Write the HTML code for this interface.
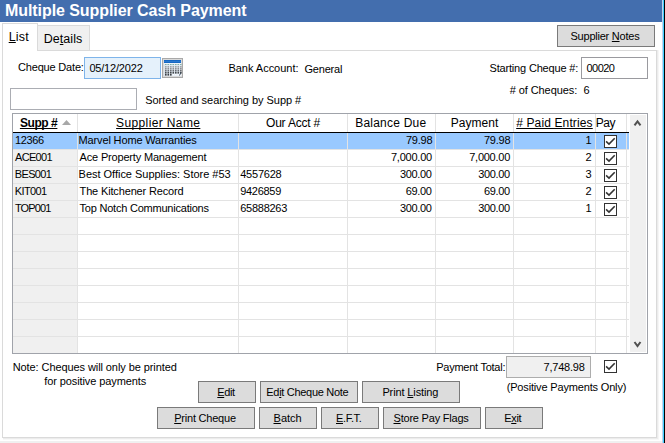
<!DOCTYPE html>
<html><head><meta charset="utf-8"><style>
html,body{margin:0;padding:0;}
body{width:665px;height:443px;position:relative;overflow:hidden;background:#fff;font-family:"Liberation Sans", sans-serif;}
.a{position:absolute;box-sizing:border-box;}
.t{position:absolute;white-space:pre;font-family:"Liberation Sans", sans-serif;}
u{text-decoration:underline;text-decoration-skip-ink:none;text-underline-offset:1px;text-decoration-thickness:1px;}
svg{position:absolute;}
</style></head><body>
<div class=a style='left:0px;top:0px;width:662px;height:22px;background:#436EAE;'></div>
<div class=a style='left:662px;top:0px;width:1px;height:443px;background:#BFD3EE;'></div>
<div class=a style='left:663px;top:0px;width:1px;height:443px;background:#3FCFFF;'></div>
<div class=a style='left:664px;top:0px;width:1px;height:443px;background:#000;'></div>
<div class=a style='left:0px;top:441px;width:662px;height:2px;background:#F0F0F0;'></div>
<div class=a style='left:2px;top:50px;width:655px;height:388px;box-shadow:inset 0 0 0 1px #DADADA;'></div>
<div class=a style='left:657px;top:50px;width:1px;height:389px;background:#ECECEC;'></div>
<div class=a style='left:658px;top:50px;width:1px;height:389px;background:#F6F6F6;'></div>
<div class=a style='left:3px;top:438px;width:655px;height:1px;background:#ECECEC;'></div>
<div class=a style='left:3px;top:439px;width:656px;height:1px;background:#F8F8F8;'></div>
<div class=a style='left:2px;top:23px;width:36px;height:28px;background:#fff;box-shadow:inset 0 0 0 1px #DADADA;'></div>
<div class=a style='left:3px;top:49px;width:34px;height:2px;background:#fff;'></div>
<div class=a style='left:37px;top:25px;width:53px;height:26px;background:#F0F0F0;box-shadow:inset 0 0 0 1px #DADADA;'></div>
<div class=a style='left:557px;top:25px;width:98px;height:22px;background:#DCDCDC;box-shadow:inset 0 0 0 1px #7A7A7A;'></div>
<div class=a style='left:84px;top:57px;width:77px;height:22px;background:#E5F1FB;box-shadow:inset 0 0 0 1px #7EB4EA;'></div>
<svg style='left:162px;top:58px' width='21' height='20' viewBox='0 0 21 20'>
<rect x='0.5' y='0.5' width='20' height='19' fill='#DCE6F0' stroke='#A9A9A9'/>
<rect x='1.5' y='1.5' width='18' height='17' fill='none' stroke='#DADADA'/>
<rect x='2' y='2' width='17' height='3' fill='#1668C4'/>
<rect x='2' y='3' width='17' height='1' fill='#2A78CE'/>
<rect x='2' y='5' width='17' height='1' fill='#F0F4F8'/>
<rect x='4.6' y='7' width='0.9' height='11' fill='#E6EEF6'/><rect x='7.1' y='7' width='0.9' height='11' fill='#E6EEF6'/><rect x='9.6' y='7' width='0.9' height='11' fill='#E6EEF6'/><rect x='12.1' y='7' width='0.9' height='11' fill='#E6EEF6'/><rect x='14.6' y='7' width='0.9' height='11' fill='#E6EEF6'/><rect x='17.1' y='7' width='0.9' height='11' fill='#E6EEF6'/><rect x='3.0' y='6' width='1.5' height='1' fill='#7FAFA8'/><rect x='5.5' y='6' width='1.5' height='1' fill='#7FAFA8'/><rect x='8.0' y='6' width='1.5' height='1' fill='#7FAFA8'/><rect x='10.5' y='6' width='1.5' height='1' fill='#7FAFA8'/><rect x='13.0' y='6' width='1.5' height='1' fill='#7FAFA8'/><rect x='15.5' y='6' width='1.5' height='1' fill='#7FAFA8'/><rect x='18.0' y='6' width='1.5' height='1' fill='#7FAFA8'/><rect x='3.0' y='8' width='1.6' height='1.6' fill='#A0A4A8'/><rect x='5.5' y='8' width='1.6' height='1.6' fill='#A0A4A8'/><rect x='8.0' y='8' width='1.6' height='1.6' fill='#A0A4A8'/><rect x='10.5' y='8' width='1.6' height='1.6' fill='#A0A4A8'/><rect x='13.0' y='8' width='1.6' height='1.6' fill='#A0A4A8'/><rect x='15.5' y='8' width='1.6' height='1.6' fill='#A0A4A8'/><rect x='18.0' y='8' width='1.6' height='1.6' fill='#A0A4A8'/><rect x='3.0' y='10' width='1.6' height='1.6' fill='#8A8E92'/><rect x='5.5' y='10' width='1.6' height='1.6' fill='#8A8E92'/><rect x='8.0' y='10' width='1.6' height='1.6' fill='#8A8E92'/><rect x='10.5' y='10' width='1.6' height='1.6' fill='#8A8E92'/><rect x='13.0' y='10' width='1.6' height='1.6' fill='#8A8E92'/><rect x='15.5' y='10' width='1.6' height='1.6' fill='#8A8E92'/><rect x='18.0' y='10' width='1.6' height='1.6' fill='#8A8E92'/><rect x='3.0' y='12' width='1.6' height='1.6' fill='#6A6E72'/><rect x='5.5' y='12' width='1.6' height='1.6' fill='#6A6E72'/><rect x='8.0' y='12' width='1.6' height='1.6' fill='#6A6E72'/><rect x='10.5' y='12' width='1.6' height='1.6' fill='#6A6E72'/><rect x='13.0' y='12' width='1.6' height='1.6' fill='#6A6E72'/><rect x='15.5' y='12' width='1.6' height='1.6' fill='#6A6E72'/><rect x='18.0' y='12' width='1.6' height='1.6' fill='#6A6E72'/><rect x='3.0' y='14' width='1.6' height='1.6' fill='#45494D'/><rect x='5.5' y='14' width='1.6' height='1.6' fill='#45494D'/><rect x='8.0' y='14' width='1.6' height='1.6' fill='#45494D'/><rect x='10.5' y='14' width='1.6' height='1.6' fill='#45494D'/><rect x='13.0' y='14' width='1.6' height='1.6' fill='#45494D'/><rect x='15.5' y='14' width='1.6' height='1.6' fill='#45494D'/><rect x='18.0' y='14' width='1.6' height='1.6' fill='#45494D'/><rect x='3.0' y='16' width='1.6' height='1.6' fill='#3A3E42'/><rect x='5.5' y='16' width='1.6' height='1.6' fill='#3A3E42'/><rect x='8.0' y='16' width='1.6' height='1.6' fill='#3A3E42'/><rect x='10.5' y='16' width='1.6' height='1.6' fill='#F8FBFE'/><rect x='13.0' y='16' width='1.6' height='1.6' fill='#F8FBFE'/><rect x='15.5' y='16' width='1.6' height='1.6' fill='#F8FBFE'/><rect x='18.0' y='16' width='1.6' height='1.6' fill='#F8FBFE'/>
<path d='M17.5 17.5 L19 14.5' stroke='#405060' stroke-width='1'/>
</svg>
<div class=a style='left:581px;top:57px;width:67px;height:22px;background:#fff;box-shadow:inset 0 0 0 1px #9A9A9F;'></div>
<div class=a style='left:10px;top:88px;width:127px;height:22px;background:#fff;box-shadow:inset 0 0 0 1px #ABADB3;'></div>
<div class=a style='left:12px;top:113px;width:636px;height:241px;background:#fff;box-shadow:inset 0 0 0 1px #A0A3AA;'></div>
<div class=a style='left:13px;top:133px;width:64px;height:220px;background:#F0F0F0;'></div>
<div class=a style='left:13px;top:133px;width:616px;height:16px;background:#99C9FF;'></div>
<div class=a style='left:13px;top:132px;width:616px;height:1px;background:#000;'></div>
<div class=a style='left:13px;top:149px;width:616px;height:1px;background:#E3E3E3;'></div>
<div class=a style='left:13px;top:166px;width:616px;height:1px;background:#E3E3E3;'></div>
<div class=a style='left:13px;top:183px;width:616px;height:1px;background:#E3E3E3;'></div>
<div class=a style='left:13px;top:200px;width:616px;height:1px;background:#E3E3E3;'></div>
<div class=a style='left:13px;top:217px;width:616px;height:1px;background:#E3E3E3;'></div>
<div class=a style='left:13px;top:234px;width:616px;height:1px;background:#E3E3E3;'></div>
<div class=a style='left:13px;top:251px;width:616px;height:1px;background:#E3E3E3;'></div>
<div class=a style='left:13px;top:268px;width:616px;height:1px;background:#E3E3E3;'></div>
<div class=a style='left:13px;top:285px;width:616px;height:1px;background:#E3E3E3;'></div>
<div class=a style='left:13px;top:302px;width:616px;height:1px;background:#E3E3E3;'></div>
<div class=a style='left:13px;top:319px;width:616px;height:1px;background:#E3E3E3;'></div>
<div class=a style='left:13px;top:336px;width:616px;height:1px;background:#E3E3E3;'></div>
<div class=a style='left:77px;top:114px;width:1px;height:239px;background:#E3E3E3;'></div>
<div class=a style='left:238px;top:114px;width:1px;height:239px;background:#E3E3E3;'></div>
<div class=a style='left:347px;top:114px;width:1px;height:239px;background:#E3E3E3;'></div>
<div class=a style='left:435px;top:114px;width:1px;height:239px;background:#E3E3E3;'></div>
<div class=a style='left:513px;top:114px;width:1px;height:239px;background:#E3E3E3;'></div>
<div class=a style='left:595px;top:114px;width:1px;height:239px;background:#E3E3E3;'></div>
<div class=a style='left:626px;top:114px;width:1px;height:239px;background:#E3E3E3;'></div>
<div class=a style='left:13px;top:132px;width:616px;height:1px;background:#000;'></div>
<div class=a style='left:630px;top:115px;width:16px;height:237px;background:#F0F0F0;'></div>
<svg style='left:630px;top:115px' width='16' height='237' viewBox='0 0 16 237'>
<path d='M4.5 10.3 L7.5 6.3 L10.5 10.3' fill='none' stroke='#505050' stroke-width='2'/>
<path d='M4.5 227.0 L7.5 231.0 L10.5 227.0' fill='none' stroke='#505050' stroke-width='2'/>
</svg>
<svg style='left:62px;top:119px' width='10' height='7' viewBox='0 0 10 7'>
<path d='M0 6 L4.5 1 L9 6 Z' fill='#A8A8A8'/></svg>
<svg style='left:604px;top:135px' width='13' height='13' viewBox='0 0 13 13'>
<rect x='0.5' y='0.5' width='12' height='12' fill='#fff' stroke='#333'/>
<path d='M2.1 6.4 L5 9.1 L10.7 3.3' fill='none' stroke='#333' stroke-width='1.6'/></svg>
<svg style='left:604px;top:152px' width='13' height='13' viewBox='0 0 13 13'>
<rect x='0.5' y='0.5' width='12' height='12' fill='#fff' stroke='#333'/>
<path d='M2.1 6.4 L5 9.1 L10.7 3.3' fill='none' stroke='#333' stroke-width='1.6'/></svg>
<svg style='left:604px;top:169px' width='13' height='13' viewBox='0 0 13 13'>
<rect x='0.5' y='0.5' width='12' height='12' fill='#fff' stroke='#333'/>
<path d='M2.1 6.4 L5 9.1 L10.7 3.3' fill='none' stroke='#333' stroke-width='1.6'/></svg>
<svg style='left:604px;top:186px' width='13' height='13' viewBox='0 0 13 13'>
<rect x='0.5' y='0.5' width='12' height='12' fill='#fff' stroke='#333'/>
<path d='M2.1 6.4 L5 9.1 L10.7 3.3' fill='none' stroke='#333' stroke-width='1.6'/></svg>
<svg style='left:604px;top:203px' width='13' height='13' viewBox='0 0 13 13'>
<rect x='0.5' y='0.5' width='12' height='12' fill='#fff' stroke='#333'/>
<path d='M2.1 6.4 L5 9.1 L10.7 3.3' fill='none' stroke='#333' stroke-width='1.6'/></svg>
<div class=a style='left:506px;top:356px;width:85px;height:22px;background:#F0F0F0;box-shadow:inset 0 0 0 1px #ADADAD;'></div>
<svg style='left:604px;top:360px' width='13' height='13' viewBox='0 0 13 13'>
<rect x='0.5' y='0.5' width='12' height='12' fill='#fff' stroke='#333'/>
<path d='M2.1 6.4 L5 9.1 L10.7 3.3' fill='none' stroke='#333' stroke-width='1.6'/></svg>
<div class=a style='left:198px;top:381px;width:58px;height:22px;background:#DCDCDC;box-shadow:inset 0 0 0 1px #7A7A7A;'></div>
<div class=a style='left:260px;top:381px;width:98px;height:22px;background:#DCDCDC;box-shadow:inset 0 0 0 1px #7A7A7A;'></div>
<div class=a style='left:362px;top:381px;width:98px;height:22px;background:#DCDCDC;box-shadow:inset 0 0 0 1px #7A7A7A;'></div>
<div class=a style='left:157px;top:407px;width:98px;height:22px;background:#DCDCDC;box-shadow:inset 0 0 0 1px #7A7A7A;'></div>
<div class=a style='left:259px;top:407px;width:58px;height:22px;background:#DCDCDC;box-shadow:inset 0 0 0 1px #7A7A7A;'></div>
<div class=a style='left:321px;top:407px;width:58px;height:22px;background:#DCDCDC;box-shadow:inset 0 0 0 1px #7A7A7A;'></div>
<div class=a style='left:383px;top:407px;width:98px;height:22px;background:#DCDCDC;box-shadow:inset 0 0 0 1px #7A7A7A;'></div>
<div class=a style='left:485px;top:407px;width:58px;height:22px;background:#DCDCDC;box-shadow:inset 0 0 0 1px #7A7A7A;'></div>
<div class=t style='left:5.00px;top:-9.00px;font-size:16px;line-height:40px;height:40px;color:#fff;font-weight:bold;letter-spacing:-0.069px;'>Multiple Supplier Cash Payment</div>
<div class=t style='left:8.70px;top:17.00px;font-size:12.5px;line-height:40px;height:40px;color:#000;letter-spacing:0.167px;'><u>L</u>ist</div>
<div class=t style='left:43.80px;top:19.00px;font-size:12.5px;line-height:40px;height:40px;color:#000;letter-spacing:0.033px;'>De<u>t</u>ails</div>
<div class=t style='left:570.50px;top:16.00px;font-size:11px;line-height:40px;height:40px;color:#000;letter-spacing:-0.231px;'>Supplier <u>N</u>otes</div>
<div class=t style='left:18.00px;top:47.00px;font-size:11px;line-height:40px;height:40px;color:#000;letter-spacing:-0.182px;'>Cheque Date:</div>
<div class=t style='left:89.40px;top:48.00px;font-size:11px;line-height:40px;height:40px;color:#000;letter-spacing:-0.189px;'>05/12/2022</div>
<div class=t style='left:228.40px;top:48.00px;font-size:11px;line-height:40px;height:40px;color:#000;letter-spacing:-0.017px;'>Bank Account:</div>
<div class=t style='left:304.50px;top:49.00px;font-size:11px;line-height:40px;height:40px;color:#000;letter-spacing:-0.217px;'>General</div>
<div class=t style='left:489.50px;top:48.00px;font-size:11px;line-height:40px;height:40px;color:#000;letter-spacing:-0.176px;'>Starting Cheque #:</div>
<div class=t style='left:586.40px;top:48.00px;font-size:11px;line-height:40px;height:40px;color:#000;letter-spacing:-0.500px;'>00020</div>
<div class=t style='left:509.80px;top:70.00px;font-size:11px;line-height:40px;height:40px;color:#000;letter-spacing:-0.092px;'># of Cheques:</div>
<div class=t style='left:583.50px;top:70.00px;font-size:11px;line-height:40px;height:40px;color:#000;'>6</div>
<div class=t style='left:145.20px;top:80.00px;font-size:11px;line-height:40px;height:40px;color:#000;letter-spacing:-0.041px;'>Sorted and searching by Supp #</div>
<div class=t style='left:19.90px;top:103.00px;font-size:12px;line-height:40px;height:40px;color:#000;font-weight:bold;letter-spacing:-0.420px;'><u>Supp #</u></div>
<div class=t style='left:116.10px;top:103.00px;font-size:12px;line-height:40px;height:40px;color:#000;letter-spacing:0.375px;'><u>Supplier Name</u></div>
<div class=t style='left:266.00px;top:103.00px;font-size:12px;line-height:40px;height:40px;color:#000;letter-spacing:-0.200px;'>Our Acct #</div>
<div class=t style='left:355.20px;top:103.00px;font-size:12px;line-height:40px;height:40px;color:#000;letter-spacing:0.220px;'>Balance Due</div>
<div class=t style='left:450.70px;top:103.00px;font-size:12px;line-height:40px;height:40px;color:#000;letter-spacing:0.050px;'>Payment</div>
<div class=t style='left:516.20px;top:103.00px;font-size:12px;line-height:40px;height:40px;color:#000;letter-spacing:0.131px;'><u># Paid Entries</u></div>
<div class=t style='left:595.80px;top:103.00px;font-size:12px;line-height:40px;height:40px;color:#000;letter-spacing:-0.500px;'>Pay</div>
<div class=t style='left:14.90px;top:120.00px;font-size:11px;line-height:40px;height:40px;color:#000;letter-spacing:-0.325px;'>12366</div>
<div class=t style='left:78.60px;top:120.00px;font-size:11px;line-height:40px;height:40px;color:#000;letter-spacing:-0.148px;'>Marvel Home Warranties</div>
<div class=t style='left:406.00px;top:120.00px;font-size:11px;line-height:40px;height:40px;color:#000;letter-spacing:-0.250px;'>79.98</div>
<div class=t style='left:484.00px;top:120.00px;font-size:11px;line-height:40px;height:40px;color:#000;letter-spacing:-0.250px;'>79.98</div>
<div class=t style='left:585.60px;top:120.00px;font-size:11px;line-height:40px;height:40px;color:#000;'>1</div>
<div class=t style='left:15.00px;top:137.00px;font-size:11px;line-height:40px;height:40px;color:#000;letter-spacing:-0.680px;'>ACE001</div>
<div class=t style='left:79.60px;top:137.00px;font-size:11px;line-height:40px;height:40px;color:#000;letter-spacing:-0.177px;'>Ace Property Management</div>
<div class=t style='left:391.00px;top:137.00px;font-size:11px;line-height:40px;height:40px;color:#000;letter-spacing:-0.243px;'>7,000.00</div>
<div class=t style='left:469.20px;top:137.00px;font-size:11px;line-height:40px;height:40px;color:#000;letter-spacing:-0.243px;'>7,000.00</div>
<div class=t style='left:585.60px;top:137.00px;font-size:11px;line-height:40px;height:40px;color:#000;'>2</div>
<div class=t style='left:14.80px;top:154.00px;font-size:11px;line-height:40px;height:40px;color:#000;letter-spacing:-0.660px;'>BES001</div>
<div class=t style='left:78.60px;top:154.00px;font-size:11px;line-height:40px;height:40px;color:#000;letter-spacing:-0.020px;'>Best Office Supplies: Store #53</div>
<div class=t style='left:240.20px;top:154.00px;font-size:11px;line-height:40px;height:40px;color:#000;letter-spacing:-0.217px;'>4557628</div>
<div class=t style='left:400.10px;top:154.00px;font-size:11px;line-height:40px;height:40px;color:#000;letter-spacing:-0.360px;'>300.00</div>
<div class=t style='left:478.30px;top:154.00px;font-size:11px;line-height:40px;height:40px;color:#000;letter-spacing:-0.360px;'>300.00</div>
<div class=t style='left:585.60px;top:154.00px;font-size:11px;line-height:40px;height:40px;color:#000;'>3</div>
<div class=t style='left:14.80px;top:171.00px;font-size:11px;line-height:40px;height:40px;color:#000;letter-spacing:-0.640px;'>KIT001</div>
<div class=t style='left:79.60px;top:171.00px;font-size:11px;line-height:40px;height:40px;color:#000;letter-spacing:-0.153px;'>The Kitchener Record</div>
<div class=t style='left:240.20px;top:171.00px;font-size:11px;line-height:40px;height:40px;color:#000;letter-spacing:-0.283px;'>9426859</div>
<div class=t style='left:405.80px;top:171.00px;font-size:11px;line-height:40px;height:40px;color:#000;letter-spacing:-0.375px;'>69.00</div>
<div class=t style='left:484.00px;top:171.00px;font-size:11px;line-height:40px;height:40px;color:#000;letter-spacing:-0.375px;'>69.00</div>
<div class=t style='left:585.60px;top:171.00px;font-size:11px;line-height:40px;height:40px;color:#000;'>2</div>
<div class=t style='left:15.00px;top:188.00px;font-size:11px;line-height:40px;height:40px;color:#000;letter-spacing:-0.900px;'>TOP001</div>
<div class=t style='left:79.60px;top:188.00px;font-size:11px;line-height:40px;height:40px;color:#000;letter-spacing:-0.222px;'>Top Notch Communications</div>
<div class=t style='left:240.20px;top:188.00px;font-size:11px;line-height:40px;height:40px;color:#000;letter-spacing:-0.257px;'>65888263</div>
<div class=t style='left:400.10px;top:188.00px;font-size:11px;line-height:40px;height:40px;color:#000;letter-spacing:-0.360px;'>300.00</div>
<div class=t style='left:478.30px;top:188.00px;font-size:11px;line-height:40px;height:40px;color:#000;letter-spacing:-0.360px;'>300.00</div>
<div class=t style='left:585.60px;top:188.00px;font-size:11px;line-height:40px;height:40px;color:#000;'>1</div>
<div class=t style='left:12.70px;top:347.00px;font-size:11px;line-height:40px;height:40px;color:#000;letter-spacing:-0.085px;'>Note: Cheques will only be printed</div>
<div class=t style='left:44.30px;top:361.00px;font-size:11px;line-height:40px;height:40px;color:#000;letter-spacing:-0.100px;'>for positive payments</div>
<div class=t style='left:436.20px;top:347.00px;font-size:11px;line-height:40px;height:40px;color:#000;letter-spacing:-0.254px;'>Payment Total:</div>
<div class=t style='left:543.60px;top:347.00px;font-size:11px;line-height:40px;height:40px;color:#000;letter-spacing:-0.229px;'>7,748.98</div>
<div class=t style='left:506.70px;top:367.00px;font-size:11px;line-height:40px;height:40px;color:#000;letter-spacing:-0.165px;'>(Positive Payments Only)</div>
<div class=t style='left:217.30px;top:372.00px;font-size:11px;line-height:40px;height:40px;color:#000;letter-spacing:-0.400px;'><u>E</u>dit</div>
<div class=t style='left:266.30px;top:372.00px;font-size:11px;line-height:40px;height:40px;color:#000;letter-spacing:-0.300px;'>Ed<u>i</u>t Cheque Note</div>
<div class=t style='left:382.40px;top:372.00px;font-size:11px;line-height:40px;height:40px;color:#000;letter-spacing:-0.125px;'>Print <u>L</u>isting</div>
<div class=t style='left:174.20px;top:398.00px;font-size:11px;line-height:40px;height:40px;color:#000;letter-spacing:-0.218px;'><u>P</u>rint Cheque</div>
<div class=t style='left:273.50px;top:398.00px;font-size:11px;line-height:40px;height:40px;color:#000;letter-spacing:0.025px;'><u>B</u>atch</div>
<div class=t style='left:336.00px;top:398.00px;font-size:11px;line-height:40px;height:40px;color:#000;letter-spacing:-0.340px;'><u>E</u>.F.T.</div>
<div class=t style='left:393.50px;top:398.00px;font-size:11px;line-height:40px;height:40px;color:#000;letter-spacing:-0.207px;'><u>S</u>tore Pay Flags</div>
<div class=t style='left:504.20px;top:398.00px;font-size:11px;line-height:40px;height:40px;color:#000;letter-spacing:-0.333px;'>E<u>x</u>it</div>
</body></html>
